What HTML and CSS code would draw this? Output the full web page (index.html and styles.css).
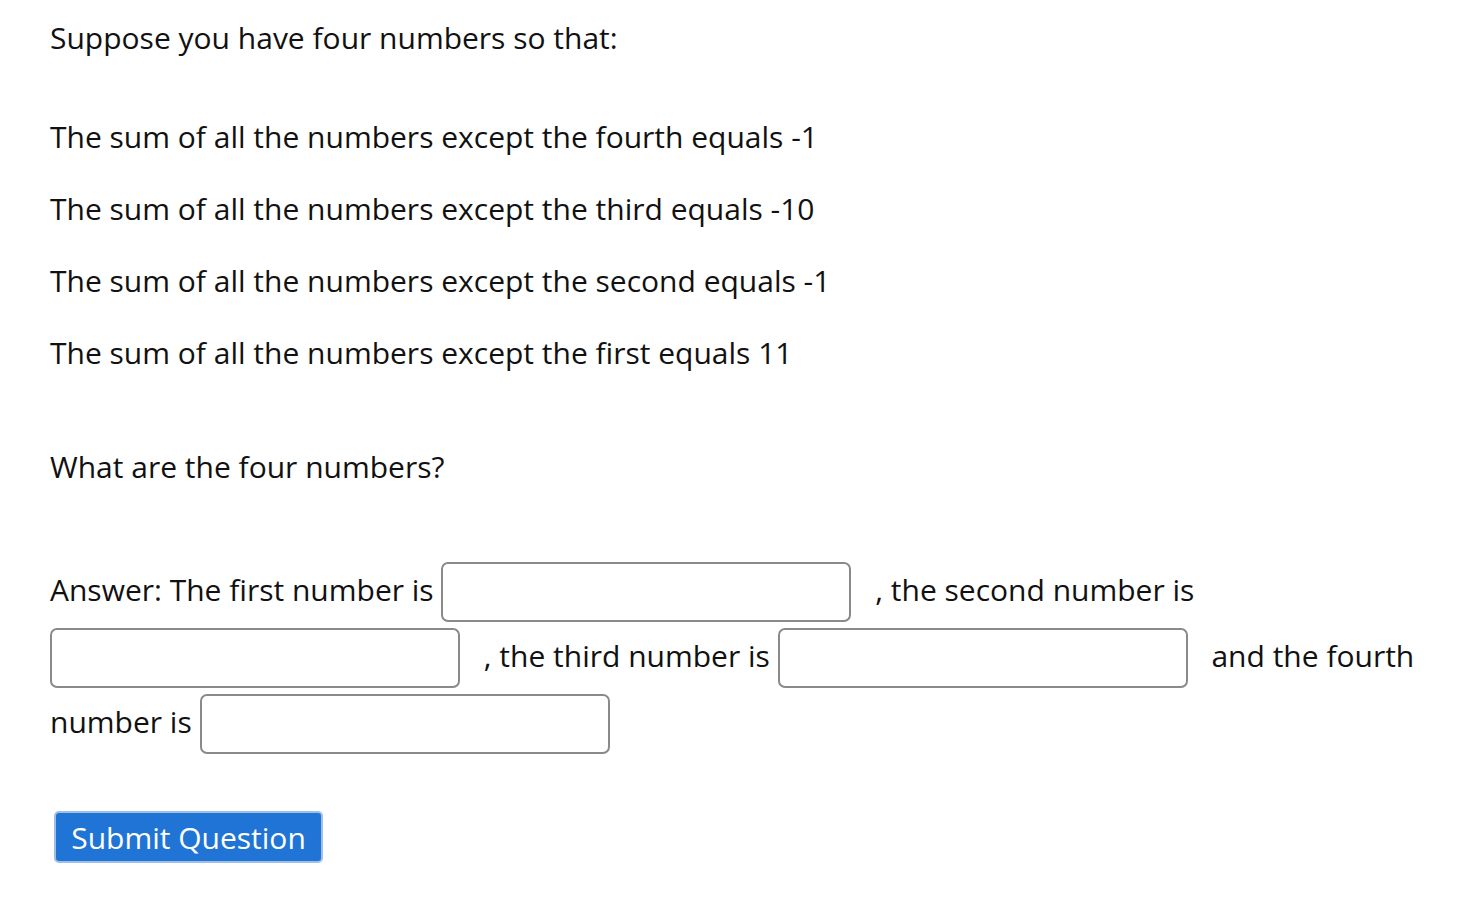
FILE: index.html
```html
<!DOCTYPE html>
<html>
<head>
<meta charset="utf-8">
<link rel="stylesheet" href="styles.css">
</head>
<body>
<div class="page">
  <p class="intro">Suppose you have four numbers so that:</p>
  <div class="facts">
    <p class="fact">The sum of all the numbers except the fourth equals -1</p>
    <p class="fact">The sum of all the numbers except the third equals -10</p>
    <p class="fact">The sum of all the numbers except the second equals -1</p>
    <p class="fact">The sum of all the numbers except the first equals 11</p>
  </div>
  <p class="question">What are the four numbers?</p>
  <div class="answer">Answer: The first number is <input class="box" type="text"> , the second number is <input class="box" type="text"> , the third number is <input class="box" type="text"> and the fourth number is <input class="box" type="text"></div>
  <div class="actions"><button class="submit" type="button">Submit Question</button></div>
</div>
</body>
</html>
```
FILE: styles.css
```css
html, body {
  margin: 0;
  padding: 0;
  background: #ffffff;
}
.page {
  font-family: "Open Sans", "Liberation Sans", sans-serif;
  font-size: 30px;
  color: #111111;
  padding: 17px 50px 0 50px;
}
p {
  margin: 0;
  line-height: 42px;
}
.intro {
  margin-bottom: 57px;
}
.facts {
  display: flex;
  flex-direction: column;
  gap: 30px;
}
.question {
  margin-top: 72px;
  margin-bottom: 69px;
}
.answer {
  line-height: 66px;
}
.box {
  box-sizing: border-box;
  width: 410px;
  height: 60px;
  margin: 0 16px 0 0;
  vertical-align: middle;
  border: 2px solid #8a8a8a;
  border-radius: 7px;
  background: #fff;
  font-family: inherit;
  font-size: 28px;
  position: relative;
  top: -1px;
}
.actions {
  margin-top: 56px;
  padding-left: 4px;
}
.submit {
  box-sizing: border-box;
  width: 269px;
  height: 52px;
  background: #1f74d6;
  color: #ffffff;
  border: 2px solid #9fbfe6;
  border-radius: 5px;
  font-family: "Open Sans", "Liberation Sans", sans-serif;
  font-size: 30px;
  padding: 0;
}
```
